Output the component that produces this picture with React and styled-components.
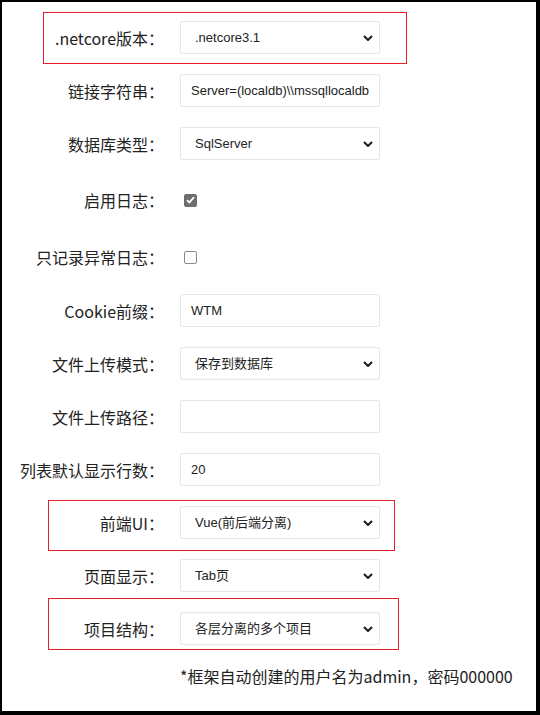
import React from "react";
import styled, { createGlobalStyle } from "styled-components";

const Global = createGlobalStyle`
  html, body { margin: 0; padding: 0; background: #fff; }
  * { box-sizing: border-box; }
`;

const Frame = styled.div`
  width: 540px;
  height: 715px;
  border-style: solid;
  border-color: #000;
  border-width: 2px 4px 4px 2px;
  background: #fff;
  padding-top: 19px;
  font-family: "Noto Sans CJK SC", "Noto Sans", sans-serif;
  color: #222;
`;

const Form = styled.form`
  display: flex;
  flex-direction: column;
  gap: 20px;
`;

const Row = styled.div`
  position: relative;
  display: grid;
  grid-template-columns: 162px 200px;
  column-gap: 16px;
  align-items: center;
  height: ${(p) => (p.$check ? "37px" : "33px")};
  padding-top: ${(p) => (p.$check ? "3px" : "0")};
`;

const Label = styled.label`
  text-align: right;
  font-size: 16px;
  line-height: 20px;
  white-space: nowrap;
  color: #222;
`;

const Field = styled.input`
  width: 200px;
  height: 33px;
  border: 1px solid #e6e6e6;
  border-radius: 2px;
  padding: 0 10px;
  font-family: "Liberation Sans", "Noto Sans CJK SC", sans-serif;
  font-size: 13px;
  color: #222;
  background: #fff;
  outline: none;
`;

const SelectWrap = styled.div`
  position: relative;
  width: 200px;
  height: 33px;
`;

const Select = styled.select`
  appearance: none;
  -webkit-appearance: none;
  width: 100%;
  height: 100%;
  border: 1px solid #e6e6e6;
  border-radius: 2px;
  padding: 0 24px 0 14px;
  font-family: "Liberation Sans", "Noto Sans CJK SC", sans-serif;
  font-size: 13px;
  color: #222;
  background: #fff;
  outline: none;
`;

const Chevron = styled.svg`
  position: absolute;
  right: 7px;
  top: 14px;
  pointer-events: none;
`;

const CheckCell = styled.div`
  display: flex;
  align-items: center;
  height: 34px;
`;

const CheckBox = styled.span`
  display: inline-flex;
  align-items: center;
  justify-content: center;
  width: 13px;
  height: 13px;
  margin-left: 4px;
  border-radius: 2px;
  border: 1px solid ${(p) => (p.$checked ? "#6e6e6e" : "#8a8a8a")};
  background: ${(p) => (p.$checked ? "#6e6e6e" : "#fff")};
`;

const Highlight = styled.div`
  position: absolute;
  border: 1px solid #e3202a;
  pointer-events: none;
`;

const Note = styled.p`
  margin: 19px 0 0 178px;
  font-size: 16px;
  line-height: 24px;
  white-space: nowrap;
  color: #222;
`;

const Dropdown = ({ value, options }) => (
  <SelectWrap>
    <Select defaultValue={value}>
      {options.map((o) => (
        <option key={o}>{o}</option>
      ))}
    </Select>
    <Chevron width="10" height="6" viewBox="0 0 10 6">
      <polyline points="1,1 5,5 9,1" fill="none" stroke="#1a1a1a" strokeWidth="2" />
    </Chevron>
  </SelectWrap>
);

const Check = ({ checked }) => (
  <CheckCell>
    <CheckBox $checked={checked}>
      {checked && (
        <svg width="9" height="8" viewBox="0 0 9 8">
          <polyline points="1,4.2 3.4,6.5 8,1.2" fill="none" stroke="#fff" strokeWidth="1.8" />
        </svg>
      )}
    </CheckBox>
  </CheckCell>
);

const CONN = "Server=(localdb)\\\\mssqllocaldb;Database=WTM_db;Trusted_Connection=True;";

export default function App() {
  return (
    <>
      <Global />
      <Frame>
        <Form>
          <Row>
            <Highlight style={{ top: -9, left: 41, width: 364, height: 52 }} />
            <Label>.netcore版本：</Label>
            <Dropdown value=".netcore3.1" options={[".netcore3.1", ".net5.0"]} />
          </Row>
          <Row>
            <Label>链接字符串：</Label>
            <Field defaultValue={CONN} />
          </Row>
          <Row>
            <Label>数据库类型：</Label>
            <Dropdown value="SqlServer" options={["SqlServer", "MySql", "PgSql"]} />
          </Row>
          <Row $check>
            <Label>启用日志：</Label>
            <Check checked />
          </Row>
          <Row $check>
            <Label>只记录异常日志：</Label>
            <Check />
          </Row>
          <Row>
            <Label>Cookie前缀：</Label>
            <Field defaultValue="WTM" />
          </Row>
          <Row>
            <Label>文件上传模式：</Label>
            <Dropdown value="保存到数据库" options={["保存到数据库", "本地文件"]} />
          </Row>
          <Row>
            <Label>文件上传路径：</Label>
            <Field defaultValue="" />
          </Row>
          <Row>
            <Label>列表默认显示行数：</Label>
            <Field defaultValue="20" />
          </Row>
          <Row>
            <Highlight style={{ top: -6, left: 46, width: 347, height: 51 }} />
            <Label>前端UI：</Label>
            <Dropdown value="Vue(前后端分离)" options={["Vue(前后端分离)", "LayUI"]} />
          </Row>
          <Row>
            <Label>页面显示：</Label>
            <Dropdown value="Tab页" options={["Tab页", "单页"]} />
          </Row>
          <Row>
            <Highlight style={{ top: -14, left: 46, width: 351, height: 52 }} />
            <Label>项目结构：</Label>
            <Dropdown value="各层分离的多个项目" options={["各层分离的多个项目", "单个项目"]} />
          </Row>
        </Form>
        <Note>*框架自动创建的用户名为admin，密码000000</Note>
      </Frame>
    </>
  );
}
